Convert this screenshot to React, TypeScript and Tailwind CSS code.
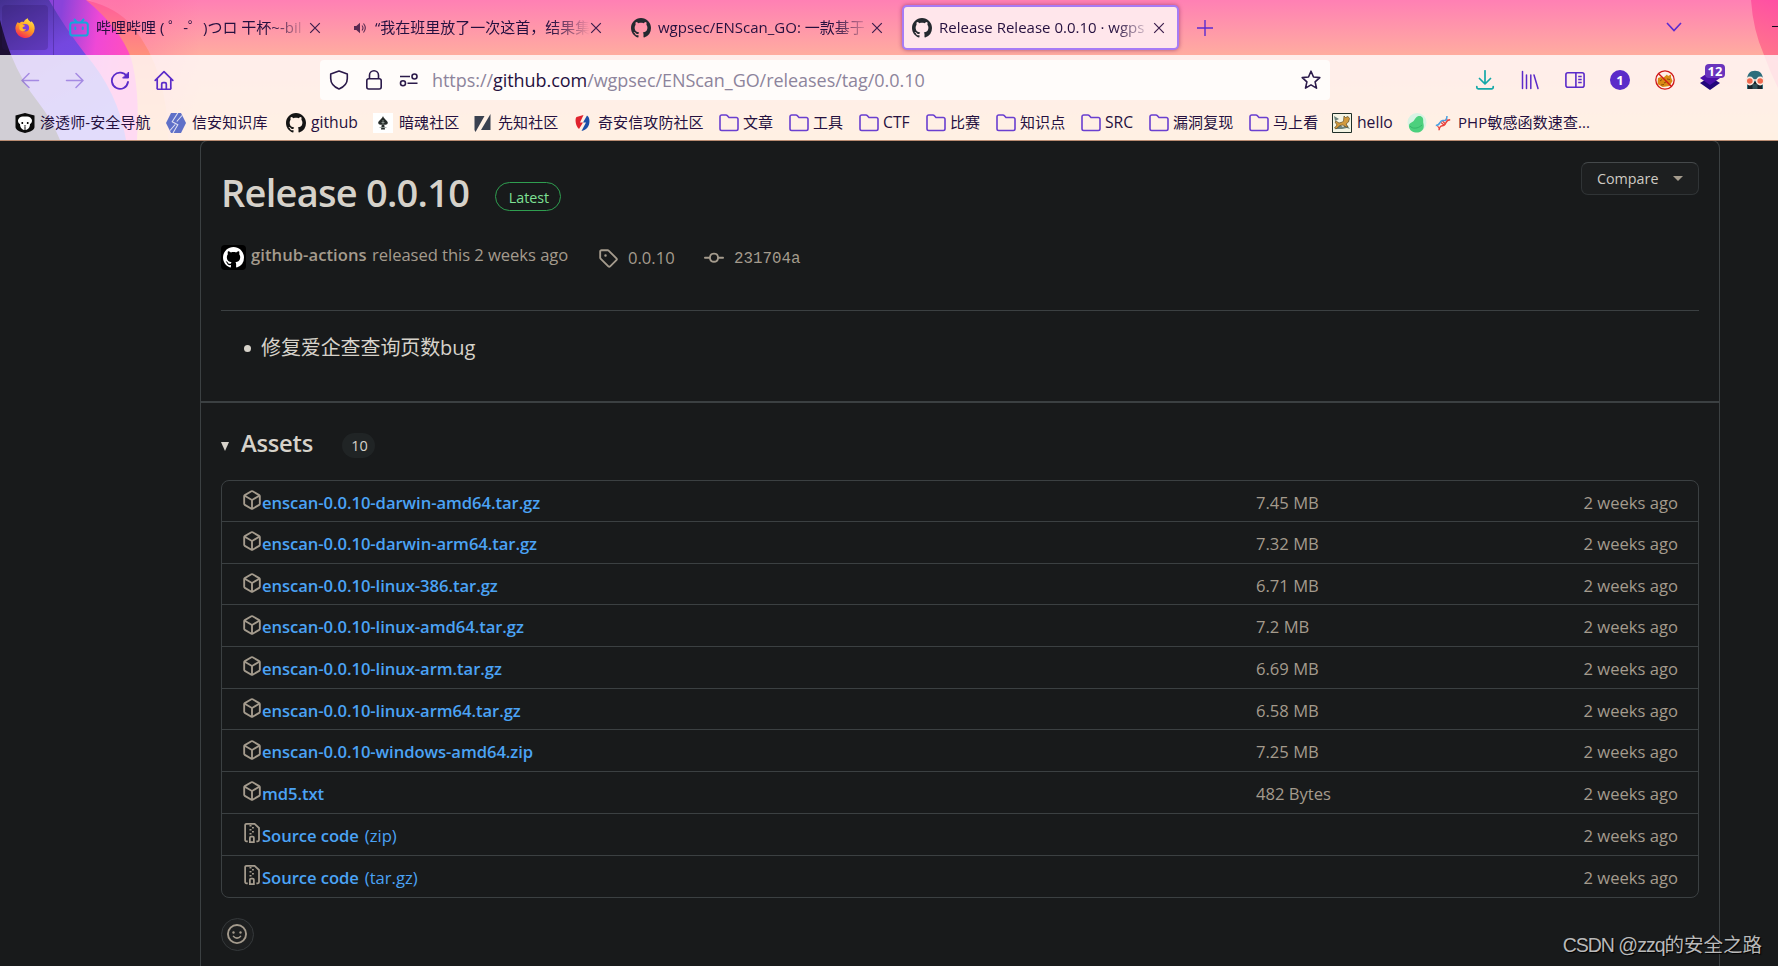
import * as React from 'react';

type IconProps = { className?: string };

const OCTICONS = {
  github:
    'M8 0C3.58 0 0 3.58 0 8c0 3.54 2.29 6.53 5.47 7.59.4.07.55-.17.55-.38 0-.19-.01-.82-.01-1.49-2.01.37-2.53-.49-2.69-.94-.09-.23-.48-.94-.82-1.13-.28-.15-.68-.52-.01-.53.63-.01 1.08.58 1.23.82.72 1.21 1.87.87 2.33.66.07-.52.28-.87.51-1.07-1.78-.2-3.64-.89-3.64-3.95 0-.87.31-1.59.82-2.15-.08-.2-.36-1.02.08-2.12 0 0 .67-.21 2.2.82.64-.18 1.32-.27 2-.27.68 0 1.36.09 2 .27 1.53-1.04 2.2-.82 2.2-.82.44 1.1.16 1.92.08 2.12.51.56.82 1.27.82 2.15 0 3.07-1.87 3.75-3.65 3.95.29.25.54.73.54 1.48 0 1.07-.01 1.93-.01 2.2 0 .21.15.46.55.38A8.013 8.013 0 0016 8c0-4.42-3.58-8-8-8z',
  package:
    'M8.878.392a1.75 1.75 0 0 0-1.756 0l-5.25 3.045A1.75 1.75 0 0 0 1 4.951v6.098c0 .624.332 1.2.872 1.514l5.25 3.045a1.75 1.75 0 0 0 1.756 0l5.25-3.045c.54-.313.872-.89.872-1.514V4.951c0-.624-.332-1.2-.872-1.514L8.878.392ZM7.875 1.69a.25.25 0 0 1 .25 0l4.63 2.685L8 7.133 3.245 4.375l4.63-2.685ZM2.5 5.677v5.372c0 .09.047.171.125.216l4.625 2.683V8.432ZM8.75 13.948l4.625-2.683a.25.25 0 0 0 .125-.216V5.677L8.75 8.432Z',
  tag: 'M1 7.775V2.75C1 1.784 1.784 1 2.75 1h5.025c.464 0 .91.184 1.238.513l6.25 6.25a1.75 1.75 0 0 1 0 2.474l-5.026 5.026a1.75 1.75 0 0 1-2.474 0l-6.25-6.25A1.752 1.752 0 0 1 1 7.775Zm1.5 0c0 .066.026.13.073.177l6.25 6.25a.25.25 0 0 0 .354 0l5.025-5.025a.25.25 0 0 0 0-.354l-6.25-6.25a.25.25 0 0 0-.177-.073H2.75a.25.25 0 0 0-.25.25ZM6 5a1 1 0 1 1 0 2 1 1 0 0 1 0-2Z',
  commit:
    'M11.93 8.5a4.002 4.002 0 0 1-7.86 0H.75a.75.75 0 0 1 0-1.5h3.32a4.002 4.002 0 0 1 7.86 0h3.32a.75.75 0 0 1 0 1.5Zm-1.43-.75a2.5 2.5 0 1 0-5 0 2.5 2.5 0 0 0 5 0Z',
};

function Octicon({ name, className }: { name: keyof typeof OCTICONS; className?: string }) {
  return (
    <svg viewBox="0 0 16 16" fill="currentColor" fillRule="evenodd" className={className}>
      <path d={OCTICONS[name]} />
    </svg>
  );
}

function FileZipIcon({ className }: IconProps) {
  return (
    <svg viewBox="0 0 16 16" fill="none" stroke="currentColor" strokeWidth="1.4" className={className}>
      <path d="M4.600 14.600H3.500a1 1 0 0 1-1-1V1.700a1 1 0 0 1 1-1h6.600l3.500 3.300v9.600a1 1 0 0 1-1 1H11.500" />
      <path d="M6 2.200h1.600M8 3.800h1.500M6 5.400h1.600M8 7h1.500M6 8.600h1.600" strokeWidth="1.200" />
      <path d="M6.300 15.300v-3.500a1 1 0 0 1 1-1h1.200a1 1 0 0 1 1 1v3.500z" />
    </svg>
  );
}

function SmileyIcon({ className }: IconProps) {
  return (
    <svg viewBox="0 0 16 16" fill="none" stroke="currentColor" strokeWidth="1.5" className={className}>
      <circle cx="8" cy="8" r="7.25" />
      <path d="M5.200 9.900c.7.9 1.600 1.400 2.800 1.400s2.100-.5 2.800-1.400" strokeLinecap="round" strokeWidth="1.300" />
      <circle cx="5.200" cy="6.800" r=".95" fill="currentColor" stroke="none" />
      <circle cx="10.800" cy="6.800" r=".95" fill="currentColor" stroke="none" />
    </svg>
  );
}

// Wallpaper behind the tab strip and the toolbars
function ThemeBackdrop() {
  return (
    <svg viewBox="0 0 1778 140" preserveAspectRatio="none" className="absolute inset-0 h-[140px] w-full">
      <defs>
        <linearGradient id="sky" x1="0" y1="0" x2="0" y2="1">
          <stop offset="0" stopColor="#ff80b4" />
          <stop offset=".39" stopColor="#ffaca0" />
          <stop offset="1" stopColor="#ffbb78" />
        </linearGradient>
        <linearGradient id="violet" x1="0" y1="0" x2=".5" y2="1">
          <stop offset="0" stopColor="#43308f" />
          <stop offset=".45" stopColor="#7447df" />
          <stop offset="1" stopColor="#6f55f0" />
        </linearGradient>
        <linearGradient id="magenta" gradientUnits="userSpaceOnUse" x1="60" y1="20" x2="130" y2="30">
          <stop offset="0" stopColor="#8a43da" />
          <stop offset=".55" stopColor="#ef48d6" />
          <stop offset="1" stopColor="#ff4ec0" />
        </linearGradient>
        <linearGradient id="coral" x1="0" y1="0" x2="0" y2="1">
          <stop offset="0" stopColor="#ff5c9c" />
          <stop offset=".38" stopColor="#ff8f7c" />
          <stop offset="1" stopColor="#ffb070" />
        </linearGradient>
        <linearGradient id="haze" gradientUnits="userSpaceOnUse" x1="120" y1="0" x2="200" y2="0">
          <stop offset="0" stopColor="#ff6aa0" />
          <stop offset="1" stopColor="#ff6aa0" stopOpacity="0" />
        </linearGradient>
        <linearGradient id="edge" gradientUnits="userSpaceOnUse" x1="1778" y1="0" x2="1758" y2="60">
          <stop offset="0" stopColor="#ff4fa4" />
          <stop offset="1" stopColor="#ff7a88" />
        </linearGradient>
      </defs>
      <rect width="1778" height="140" fill="url(#sky)" />
      <path d="M90 0H200V140H168Q168 70 133 27Z" fill="url(#haze)" opacity=".45" />
      <path d="M86 0Q118 8 133 27Q168 70 168 140H110Z" fill="url(#coral)" />
      <path d="M48 0H86Q120 28 131 58Q140 90 137 140H90Z" fill="url(#magenta)" />
      <path d="M0 0H49Q65 28 86 55Q118 92 126 140H0Z" fill="url(#violet)" />
      <path d="M0 20Q5 40 11 55Q22 82 38 102Q52 120 60 140H0Z" fill="#1d1033" />
      <path d="M1751 0Q1753 30 1764 55Q1770 72 1778 88V0Z" fill="url(#edge)" />
    </svg>
  );
}

function FirefoxIcon() {
  return (
    <svg viewBox="0 0 20 20" className="size-5">
      <defs>
        <linearGradient id="fx" x1=".8" y1="0" x2=".3" y2="1">
          <stop offset="0" stopColor="#ffe94a" />
          <stop offset=".5" stopColor="#ff9a22" />
          <stop offset="1" stopColor="#f5225a" />
        </linearGradient>
      </defs>
      <path d="M2.500 4.200c.6.500 1.400.8 2.100.9C6 3.500 8 3.700 8.700 4.200 9 3 10.500 1 13 .3c-.4 1.700 1.500 2.400 2.900 4 .3-.3.300-.8.200-1.200 2.300 1.700 3.600 4.500 3.600 7.400A9.600 9.400 0 0 1 .4 10.700C.3 8.200 1.200 6.300 2.500 4.200Z" fill="url(#fx)" />
      <circle cx="10.300" cy="9.800" r="3.800" fill="#7a3fe0" />
      <path d="M4.500 6.600c2-.9 3.800.3 5.600 1.100-.8 1.300-2.400.9-2.600 2.100 0 1.200 1.700 2 3.500 1.300-1.200 3.300-6 2.700-6.700-.6z" fill="#ffb52e" />
    </svg>
  );
}

function BilibiliIcon() {
  return (
    <svg viewBox="0 0 20 20" fill="none" stroke="#16a6dc" strokeWidth="2" strokeLinecap="round" className="size-5">
      <path d="M5.500 1.500 8 4.300M14.500 1.500 12 4.300" />
      <rect x="1.200" y="4.500" width="17.600" height="13" rx="2.600" />
      <path d="M6.300 9.500v1.600M13.700 9.500v1.600" />
    </svg>
  );
}

function SpeakerIcon() {
  return (
    <svg viewBox="0 0 14 14" className="ml-[3px] size-3.5">
      <path d="M1 5h2.300L7 1.800v10.400L3.300 9H1z" fill="#5a2a52" />
      <path d="M9 4.500q2 2.500 0 5M10.500 2.500q3.600 4.500 0 9" fill="none" stroke="#5a2a52" strokeWidth="1.100" />
    </svg>
  );
}

function CloseIcon() {
  return (
    <svg viewBox="0 0 12 12" stroke="#3a1d4c" strokeWidth="1.200" className="size-3 shrink-0">
      <path d="M1.200 1.200l9.600 9.600M10.800 1.200 1.200 10.800" />
    </svg>
  );
}

type Tab = { title: string; icon: React.ReactNode; iconBox: string; active?: boolean };

const TABS: Tab[] = [
  { title: '哔哩哔哩 ( ゜-゜)つロ 干杯~-bil', icon: <BilibiliIcon />, iconBox: 'w-[27px]' },
  { title: '“我在班里放了一次这首，结果集', icon: <SpeakerIcon />, iconBox: 'w-[25px]' },
  { title: 'wgpsec/ENScan_GO: 一款基于', icon: <Octicon name="github" className="size-5 text-[#24292f]" />, iconBox: 'w-[27px]' },
  { title: 'Release Release 0.0.10 · wgps', icon: <Octicon name="github" className="size-5 text-[#24292f]" />, iconBox: 'w-[27px]', active: true },
];

function TabStrip() {
  return (
    <div className="relative flex h-[55px] items-center">
      <div className="flex h-full w-[54px] items-center border-r border-[#4b2a9a]/60 pl-[2px]">
        <div className="flex h-[45px] w-[46px] items-center justify-center rounded bg-[#2b1560]/25">
          <FirefoxIcon />
        </div>
      </div>
      <div className="ml-[5px] flex">
        {TABS.map((t) => (
          <div key={t.title} className="flex w-[281px] pr-[4px]">
            <div
              className={
                t.active
                  ? 'flex h-[45px] w-full items-center rounded-[5px] border-2 border-[#a77bf5] bg-[#ffe6eb] pl-[8px] pr-[12px] shadow-[0_0_4px_rgba(120,30,80,0.6)]'
                  : 'flex h-[45px] w-full items-center pl-[10px] pr-[15px]'
              }
            >
              <span className={`flex shrink-0 ${t.iconBox}`}>{t.icon}</span>
              <span className="flex-1 whitespace-pre pb-[2px] text-[15px] leading-6 text-[#25103f] [mask-image:linear-gradient(to_right,black_82%,transparent)]">
                {t.title}
              </span>
              <CloseIcon />
            </div>
          </div>
        ))}
      </div>
      <svg viewBox="0 0 16 16" stroke="#5b2bd0" strokeWidth="1.400" className="ml-[14px] size-4">
        <path d="M8 0v16M0 8h16" />
      </svg>
      <div className="flex-1" />
      <svg viewBox="0 0 16 10" fill="none" stroke="#5b2bd0" strokeWidth="1.600" className="mr-[90px] mb-[2px] h-[10px] w-4">
        <path d="M1 1l7 7.500L15 1" />
      </svg>
      <div className="mb-[2px] h-px w-[6px] bg-[#15051f]" />
    </div>
  );
}

function NavBar() {
  return (
    <div className="flex h-[45px] items-end">
      <div className="flex h-[40px] w-[320px] items-center text-[#5b2bc9]">
        <svg viewBox="0 0 20 20" fill="none" stroke="currentColor" strokeWidth="1.500" strokeLinecap="round" strokeLinejoin="round" className="ml-5 size-5 opacity-45">
          <path d="M18.500 10.500H2M9 3.500 2 10.500l7 7" />
        </svg>
        <svg viewBox="0 0 20 20" fill="none" stroke="currentColor" strokeWidth="1.500" strokeLinecap="round" strokeLinejoin="round" className="ml-[25px] size-5 opacity-45">
          <path d="M1.500 10.500H18M11 3.500l7 7-7 7" />
        </svg>
        <svg viewBox="0 0 20 20" fill="none" stroke="currentColor" strokeWidth="1.800" strokeLinecap="round" className="ml-[25px] size-5">
          <path d="M17 6.700A8.100 8.100 0 1 0 18 12" />
          <path d="M18.500 2.500V8H13z" fill="currentColor" strokeWidth="1" />
        </svg>
        <svg viewBox="0 0 20 20" fill="none" stroke="currentColor" strokeWidth="1.700" strokeLinecap="round" strokeLinejoin="round" className="ml-[24px] size-5">
          <path d="M1.200 10.300 10 1.700l8.800 8.600M3.200 9v8.500a1.300 1.300 0 0 0 1.300 1.800h11a1.300 1.300 0 0 0 1.300-1.800V9" />
          <path d="M7.700 19v-5a1.300 1.300 0 0 1 1.300-1.300h2a1.300 1.300 0 0 1 1.300 1.300v5" />
        </svg>
      </div>
      <div className="flex h-[40px] w-[1010px] items-center rounded bg-[#fffcfa] text-[#2b1a4a]">
        <svg viewBox="0 0 20 20" fill="none" stroke="currentColor" strokeWidth="1.600" strokeLinejoin="round" className="ml-[9px] size-5">
          <path d="M10 1 18.300 4v4.500c0 4.500-3.500 8.500-8.300 10.500C5.200 17 1.700 13 1.700 8.500V4z" />
        </svg>
        <svg viewBox="0 0 20 20" fill="none" stroke="currentColor" strokeWidth="1.600" className="ml-[15px] size-5">
          <rect x="2.800" y="8.700" width="14.400" height="10.300" rx="2" />
          <path d="M5.500 8.500V5.300a4.500 4.500 0 0 1 9 0v3.200" />
        </svg>
        <svg viewBox="0 0 20 20" fill="none" stroke="currentColor" strokeWidth="1.600" className="ml-[15px] size-5">
          <path d="M1 6.500h10M8.500 13.200H18.500" />
          <circle cx="15.500" cy="6.500" r="2.500" />
          <circle cx="4" cy="13.200" r="2.500" />
        </svg>
        <span className="ml-[13px] flex-1 pt-px text-[18px] tracking-[-0.05px] text-[#8d849c]">
          https://<span className="text-[#25103f]">github.com</span>/wgpsec/ENScan_GO/releases/tag/0.0.10
        </span>
        <svg viewBox="0 0 20 20" fill="none" stroke="currentColor" strokeWidth="1.600" strokeLinejoin="round" className="mr-[9px] size-5">
          <path d="M10 1.200 12.500 7l6.300.6-4.700 4.200 1.400 6.300L10 14.900l-5.500 3.200 1.400-6.300L1.200 7.600 7.500 7z" />
        </svg>
      </div>
      <div className="flex h-[40px] flex-1 items-center justify-end gap-[25px] pr-[13px] text-[#5b2bc9]">
        <svg viewBox="0 0 20 20" fill="none" stroke="#14a8a8" strokeWidth="1.700" strokeLinecap="round" strokeLinejoin="round" className="size-5">
          <path d="M10 .8v13M4.500 8.500 10 14l5.500-5.500M1.800 16.500v.8a1.500 1.500 0 0 0 1.500 1.500h13.400a1.500 1.500 0 0 0 1.500-1.500v-.8" />
        </svg>
        <svg viewBox="0 0 20 20" fill="none" stroke="currentColor" strokeWidth="1.500" strokeLinecap="round" className="size-5">
          <path d="M2.500 1.500v17M6.500 5v13.500M10.800 5v13.500M14 5l4 13.500" />
        </svg>
        <svg viewBox="0 0 20 20" fill="none" stroke="currentColor" strokeWidth="1.600" className="size-5">
          <rect x=".9" y="2.700" width="18.200" height="14.600" rx="2" />
          <path d="M10.900 2.700v14.600M13.200 6.500h3.500M13.200 9.500h3.500M13.200 12.500h3.500" />
        </svg>
        <span className="flex size-5 items-center justify-center rounded-full bg-[#5b2bc9] text-[13px] leading-none font-bold text-white">1</span>
        <svg viewBox="0 0 20 20" className="size-5">
          <path d="M3 8l3-1 2 1 4-3.500 1 1.500 3-1.500v3l1.500 3.500-3 5-7 1-5-3z" fill="#d98a14" />
          <path d="M5 11l2-1.500M9 13l2-1M12 9l3 .5M6 15l3-.5" stroke="#8a4a0a" />
          <circle cx="10" cy="10" r="9.200" fill="none" stroke="#cf1717" strokeWidth="1.300" />
          <path d="M3.700 3.700l12.600 12.600" stroke="#cf1717" strokeWidth="1.400" />
        </svg>
        <div className="relative size-5">
          <svg viewBox="0 0 20 20" className="size-5">
            <path d="M10 7 20 13 10 20 0 13z" fill="#22067a" />
            <path d="M10 1.500 20 8 10 15 0 8z" fill="#4a0fa8" />
          </svg>
          <span className="absolute -top-[6px] left-[5px] flex h-[14px] w-5 items-center justify-center rounded-sm bg-[#6a34bd] text-[13px] leading-none font-bold text-white">
            12
          </span>
        </div>
        <svg viewBox="0 0 20 20" className="size-5">
          <path d="M2 10C2 4 5 .8 10 .8S18 4 18 10v9H2z" fill="#2d6e7c" />
          <path d="M3 12h14v7H3z" fill="#17242b" />
          <path d="M7.500 14h5v5h-5z" fill="#315058" />
          <circle cx="4.800" cy="11" r="3.600" fill="#f0694e" stroke="#f9e9df" strokeWidth="1.600" />
          <circle cx="15.200" cy="11" r="3.600" fill="#f0694e" stroke="#f9e9df" strokeWidth="1.600" />
          <path d="M8 10h4" stroke="#f9e9df" strokeWidth="1.500" />
        </svg>
      </div>
    </div>
  );
}

function FolderIcon() {
  return (
    <svg viewBox="0 0 20 20" fill="none" stroke="#6a3fd0" strokeWidth="1.600" strokeLinejoin="round" className="size-5">
      <path d="M1 15.800V3.700a1.700 1.700 0 0 1 1.700-1.700h4.200a2 2 0 0 1 1.500.7L10 4.500h7.300A1.700 1.700 0 0 1 19 6.200v9.600a1.700 1.700 0 0 1-1.700 1.700H2.700A1.700 1.700 0 0 1 1 15.800Z" />
    </svg>
  );
}

function BadgeIcon() {
  return (
    <svg viewBox="0 0 20 20" className="size-5">
      <path d="M10 0 19.500 2.500v11.500c0 3-4.500 5-9.500 6C5 19 .5 17 .5 14V2.500z" fill="#0b0b0b" />
      <path d="M3.500 6C5 3.500 7 3.500 10 3.500s5 0 6.500 2.500c1.200 2 0 4.500-1.500 5 0 3.500-2 6-5 6s-5-2.500-5-6C3.500 10.500 2.300 8 3.500 6z" fill="#fff" />
      <path d="M6.500 9h1.600v2H6.500zM11.900 9h1.600v2h-1.600zM8.800 12.500h2.400L10 14z" fill="#0b0b0b" />
      <path d="M10 14v3" stroke="#0b0b0b" />
    </svg>
  );
}

function KnotIcon() {
  return (
    <svg viewBox="0 0 20 20" className="size-5">
      <path d="M5 0h10l5 10-5 10H5L0 10z" fill="#5f70c8" />
      <path d="M11.800 0 6.200 8.800l5.600 3L7 20M16 2.500l-5.200 6 M4 17.500l5.200-6" fill="none" stroke="#dfe0f2" strokeWidth="1.100" />
    </svg>
  );
}

function SpadeIcon() {
  return (
    <svg viewBox="0 0 20 20" className="size-5">
      <path d="M0 0h20v20H0z" fill="#fff" />
      <path d="M10 3C10.700 6 14.800 7.500 14.800 9.800c0 1.700-2 2.500-3.600 1.700L12 16.500H8l.8-5c-1.600.8-3.600 0-3.600-1.700C5.200 7.500 9.300 6 10 3z" fill="#252b29" />
      <path d="M10 7v5M8.500 9.500h3M6.500 14.500h7" stroke="#9aa5a0" strokeWidth=".8" />
    </svg>
  );
}

function XianzhiIcon() {
  return (
    <svg viewBox="0 0 18 20" className="h-5 w-[18px]">
      <path d="M.5 3h10L1.500 19 .5 17zM16.500 1v16H7z" fill="#3a4150" />
    </svg>
  );
}

function QianxinIcon() {
  return (
    <svg viewBox="0 0 16 20" className="h-5 w-4">
      <path d="M8.500 2 5 9.500h3L4 16C0 12.500 0 5 1.500 4z" fill="#e0232e" />
      <path d="M12 2.500c3.500 2 3 9 .5 12-1.500 2-3.500 3-6 3.500L11 9.500H8z" fill="#1c4fa8" />
    </svg>
  );
}

function CatIcon() {
  return (
    <svg viewBox="0 0 20 20" className="size-5">
      <path d="M.5.500h19v19H.5z" fill="#f4f4e4" stroke="#1f2f28" />
      <path d="M2 3l5 3-4 2zM3 16l5-4 3 2 3-3 4 5-3-1-5 1z" fill="#6c827b" />
      <path d="M12 3l1.500 1.500L16 3.500l1.500 2-1 3.500-2.500 2 2 3h-2l-3-2-3 .5L4 16l-1.500-1L5 12 3 9l1-1 3 2 3.500-1 1-1z" fill="#d29a3d" stroke="#4b3a18" strokeWidth=".6" />
    </svg>
  );
}

function GreenIcon() {
  return (
    <svg viewBox="0 0 20 20" className="size-5">
      <ellipse cx="10" cy="9.500" rx="9.500" ry="9.500" fill="#d9f3e4" />
      <path d="M11.500 3c3.500-.5 5 2 4.700 5-.2 2 .8 3.500.5 6-.4 3.800-4 6-8 5.500C4.500 19 1.500 16 2 12.500c.3-3 3.500-3 5-5C8 6 9 3.500 11.500 3z" fill="#4cd07d" />
      <path d="M3 13c2 3 8 3 12-1" stroke="#35b96a" fill="none" />
    </svg>
  );
}

function DnaIcon() {
  return (
    <svg viewBox="0 0 16 16" fill="none" strokeWidth="1.500" className="size-4">
      <path d="M2.500 11l2 2.500M6 7.500 9 10M10.500 4l2.500 1.500M7.500 6l3 3" stroke="#e8413c" strokeWidth="1.200" />
      <path d="M.8 10.500C6 10.500 4 5 8 5.500s3.500-1.500 4-4.500" stroke="#4a9fe0" />
      <path d="M4 15.200c.5-5 2.500-4 5-5s1-5 6.200-5.500" stroke="#e8413c" />
    </svg>
  );
}

type Bookmark = { label: string; icon: React.ReactNode; width: string; gap: string; latin?: boolean };

const folder = <FolderIcon />;

const BOOKMARKS: Bookmark[] = [
  { label: '渗透师-安全导航', icon: <BadgeIcon />, width: 'w-[151px]', gap: 'gap-[5px]' },
  { label: '信安知识库', icon: <KnotIcon />, width: 'w-[120px]', gap: 'gap-[6px]' },
  { label: 'github', icon: <Octicon name="github" className="size-5 text-[#141414]" />, width: 'w-[87px]', gap: 'gap-[5px]', latin: true },
  { label: '暗魂社区', icon: <SpadeIcon />, width: 'w-[101px]', gap: 'gap-[6px]' },
  { label: '先知社区', icon: <XianzhiIcon />, width: 'w-[101px]', gap: 'gap-[6px]' },
  { label: '奇安信攻防社区', icon: <QianxinIcon />, width: 'w-[144px]', gap: 'gap-[7px]' },
  { label: '文章', icon: folder, width: 'w-[70px]', gap: 'gap-[4px]' },
  { label: '工具', icon: folder, width: 'w-[70px]', gap: 'gap-[4px]' },
  { label: 'CTF', icon: folder, width: 'w-[67px]', gap: 'gap-[4px]', latin: true },
  { label: '比赛', icon: folder, width: 'w-[70px]', gap: 'gap-[4px]' },
  { label: '知识点', icon: folder, width: 'w-[85px]', gap: 'gap-[4px]' },
  { label: 'SRC', icon: folder, width: 'w-[68px]', gap: 'gap-[4px]', latin: true },
  { label: '漏洞复现', icon: folder, width: 'w-[100px]', gap: 'gap-[4px]' },
  { label: '马上看', icon: folder, width: 'w-[83px]', gap: 'gap-[4px]' },
  { label: 'hello', icon: <CatIcon />, width: 'w-[75px]', gap: 'gap-[5px]', latin: true },
  { label: '', icon: <GreenIcon />, width: 'w-[28px]', gap: 'gap-0' },
  { label: 'PHP敏感函数速查...', icon: <DnaIcon />, width: 'w-[170px]', gap: 'gap-[7px]' },
];

function BookmarksBar() {
  return (
    <div className="flex h-[40px] items-center pt-[6px] pl-[15px]">
      {BOOKMARKS.map((b) => (
        <div key={b.label} className={`flex shrink-0 items-center whitespace-nowrap leading-none text-[#25103f] ${b.width} ${b.gap}`}>
          <span className="shrink-0">{b.icon}</span>
          <span className={b.latin ? 'text-[15.7px]' : 'pb-px text-[15px] tracking-[0.1px]'}>{b.label}</span>
        </div>
      ))}
    </div>
  );
}

type Asset = { name: string; suffix?: string; size?: string };

const ASSETS: Asset[] = [
  { name: 'enscan-0.0.10-darwin-amd64.tar.gz', size: '7.45 MB' },
  { name: 'enscan-0.0.10-darwin-arm64.tar.gz', size: '7.32 MB' },
  { name: 'enscan-0.0.10-linux-386.tar.gz', size: '6.71 MB' },
  { name: 'enscan-0.0.10-linux-amd64.tar.gz', size: '7.2 MB' },
  { name: 'enscan-0.0.10-linux-arm.tar.gz', size: '6.69 MB' },
  { name: 'enscan-0.0.10-linux-arm64.tar.gz', size: '6.58 MB' },
  { name: 'enscan-0.0.10-windows-amd64.zip', size: '7.25 MB' },
  { name: 'md5.txt', size: '482 Bytes' },
  { name: 'Source code', suffix: '(zip)' },
  { name: 'Source code', suffix: '(tar.gz)' },
];

function ReleaseHeader() {
  return (
    <div className="mx-5 h-[170px] border-b border-[#3b4042]">
      <div className="flex h-[92px] items-start justify-between">
        <div className="flex items-center pt-[26px]">
          <h1 className="w-[274px] text-[38px] leading-[50px] font-semibold tracking-[-0.75px] whitespace-nowrap">Release 0.0.10</h1>
          <span className="mt-[9px] flex h-[29px] w-[66px] items-center justify-center rounded-full border border-[#2f9e50] pt-[3px] pl-[2px] text-[14.3px] leading-none text-[#7ee094]">
            Latest
          </span>
        </div>
        <button className="mt-[21px] flex h-[33px] w-[118px] items-center rounded-[7px] border border-[#303436] border-t-[#45494b] bg-[#1d1f20] pl-[15px] text-[14.3px] text-[#cfcbc4]">
          <span className="w-[76px] text-left">Compare</span>
          <span className="border-x-[5px] border-t-[5px] border-x-transparent border-t-[#a49b8d]" />
        </button>
      </div>
      <div className="flex h-[46px] items-center text-[16.6px] text-[#a49b8d]">
        <span className="mt-[3px] flex h-[25px] w-[25px] items-center justify-center rounded bg-black">
          <Octicon name="github" className="size-[21px] text-white" />
        </span>
        <span className="-mt-[2px] ml-[5px] w-[121px] font-semibold tracking-[0.05px]">github-actions</span>
        <span className="-mt-[2px] w-[226px] whitespace-nowrap tracking-[-0.05px]">released this 2 weeks ago</span>
        <Octicon name="tag" className="mt-[3px] size-5" />
        <span className="mt-[4px] ml-[10px] w-[76px]">0.0.10</span>
        <Octicon name="commit" className="mt-[3px] size-5" />
        <span className="mt-[7px] ml-[10px] font-['Liberation_Mono'] text-[15.8px]">231704a</span>
      </div>
    </div>
  );
}

function AssetRow({ asset }: { asset: Asset }) {
  return (
    <li className="flex h-[41.7px] items-center border-t border-[#3b4042] px-5 text-[16.6px] text-[#a49b8d] first:h-[40px] first:border-t-0 last:h-[42.4px]">
      <span className="mb-[2px] flex w-[20px] shrink-0">
        {asset.suffix ? <FileZipIcon className="size-5" /> : <Octicon name="package" className="size-5" />}
      </span>
      <span className="w-[994px] pt-[4px] text-[#4ba3f5]">
        <span className="font-semibold tracking-[-0.05px]">{asset.name}</span>
        {asset.suffix && <span className="ml-[6px]">{asset.suffix}</span>}
      </span>
      <span className="flex-1 pt-[4px]">{asset.size}</span>
      <span className="pt-[4px]">2 weeks ago</span>
    </li>
  );
}

export default function App() {
  return (
    <div className="relative h-[966px] w-[1778px] overflow-hidden bg-[#181a1b] font-['Open_Sans','Noto_Sans_CJK_SC',sans-serif] text-[#d6d2ca]">
      <header className="relative z-10 h-[141px] border-b border-[#b98c72]">
        <ThemeBackdrop />
        <TabStrip />
        <div className="relative h-[85px] bg-[#fffefe]/80">
          <NavBar />
          <BookmarksBar />
        </div>
      </header>

      <main className="mx-auto -mt-px mr-[58px] ml-[200px] h-[840px] rounded-t-[8px] border border-b-0 border-[#3b4042]">
        <ReleaseHeader />
        <ul className="flex h-[90px] items-start pt-[22px] pl-[41px] text-[20px] leading-[30px]">
          <li className="flex items-center">
            <span className="mr-[10px] ml-[2px] size-[7px] rounded-full bg-[#d6d2ca]" />
            <span className="whitespace-nowrap tracking-[-0.1px]">修复爱企查查询页数bug</span>
          </li>
        </ul>
        <div className="h-[2px] bg-[#3b4042]" />

        <section className="px-5 pt-[20px]">
          <div className="flex h-[57px] items-start">
            <span className="mt-[19px] border-x-[4.5px] border-t-[9px] border-x-transparent border-t-[#d6d2ca]" />
            <h2 className="ml-[12px] w-[101px] pt-px text-[23.7px] leading-[38px] font-semibold tracking-[-0.2px]">Assets</h2>
            <span className="mt-[10px] flex h-[25px] w-[33px] items-center justify-center rounded-full bg-[#202425] pt-[2px] pl-[2px] text-[14.5px] leading-none">10</span>
          </div>
          <ul className="rounded-[8px] border border-[#3b4042]">
            {ASSETS.map((a) => (
              <AssetRow key={a.name + (a.suffix || '')} asset={a} />
            ))}
          </ul>
          <button className="mt-[20px] flex size-[33px] items-center justify-center rounded-full border border-[#35393b] bg-[#1d1f20] pr-px text-[#a49b8d]">
            <SmileyIcon className="size-5" />
          </button>
        </section>
      </main>

      <div className="absolute right-[16px] bottom-[8px] text-[19.5px] leading-[26px] whitespace-nowrap text-[#b9b9b9] [font-family:'Liberation_Sans','Noto_Sans_CJK_SC',sans-serif] [text-shadow:1px_1px_1px_#000]">
        <span className="tracking-[-1px]">CSDN @zzq</span>的安全之路
      </div>
    </div>
  );
}
